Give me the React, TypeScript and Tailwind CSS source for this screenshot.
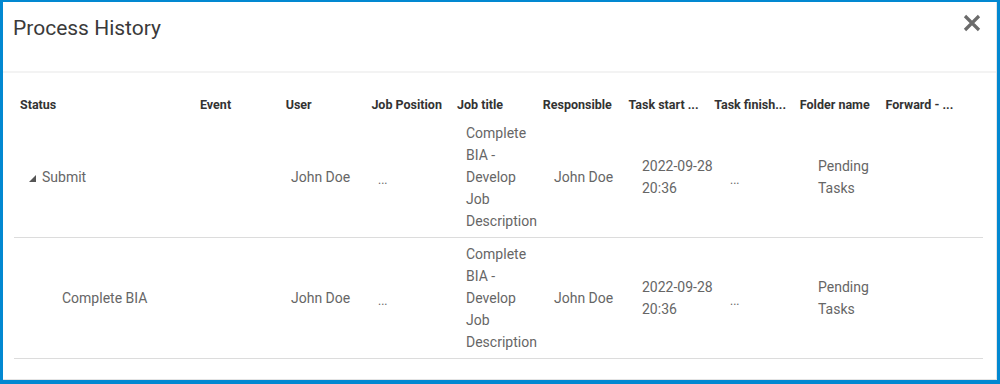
import React from "react";

type Row = {
  status: string;
  expandable: boolean;
  user: string;
  jobPosition: string;
  jobTitle: string[];
  responsible: string;
  taskStart: string[];
  taskFinish: string;
  folder: string[];
};

const headers = [
  "Event",
  "User",
  "Job Position",
  "Job title",
  "Responsible",
  "Task start ...",
  "Task finish...",
  "Folder name",
  "Forward - ...",
];

const rows: Row[] = [
  {
    status: "Submit",
    expandable: true,
    user: "John Doe",
    jobPosition: "...",
    jobTitle: ["Complete", "BIA -", "Develop", "Job", "Description"],
    responsible: "John Doe",
    taskStart: ["2022-09-28", "20:36"],
    taskFinish: "...",
    folder: ["Pending", "Tasks"],
  },
  {
    status: "Complete BIA",
    expandable: false,
    user: "John Doe",
    jobPosition: "...",
    jobTitle: ["Complete", "BIA -", "Develop", "Job", "Description"],
    responsible: "John Doe",
    taskStart: ["2022-09-28", "20:36"],
    taskFinish: "...",
    folder: ["Pending", "Tasks"],
  },
];

function Lines({ lines }: { lines: string[] }) {
  return (
    <div className="flex flex-col">
      {lines.map((l, i) => (
        <span key={i} className="leading-[22px]">
          {l}
        </span>
      ))}
    </div>
  );
}

export default function App() {
  return (
    <div
      className="w-[1000px] h-[384px] bg-[#0288d1] pt-[2px] pl-[3px] pr-[3px] pb-[4px] overflow-hidden"
      style={{ fontFamily: "Roboto, 'Liberation Sans', sans-serif" }}
    >
      <div className="h-full bg-white flex flex-col border-r border-b border-[#e4e4e4]">
        {/* title bar */}
        <div className="h-[71px] shrink-0 flex items-start justify-between pl-[10px] pr-[14px] pt-[14px] border-b-2 border-[#f3f3f3]">
          <h2 className="text-[21px] leading-[24px] text-[#3a3a3a]">Process History</h2>
          <svg width="20" height="20" viewBox="0 0 20 20" className="mt-[-3px]">
            <path d="M3 3 L17 17 M17 3 L3 17" stroke="#6b6b6b" strokeWidth="3.2" strokeLinecap="butt" />
          </svg>
        </div>

        <div className="pl-[11px] pr-[13px]">
          {/* header */}
          <div className="flex h-[44px] items-end pb-[5px] text-[12.5px] leading-[15px] font-bold text-[#333] whitespace-nowrap">
            <div className="w-[180px] pl-[6px]">Status</div>
            {headers.map((h) => (
              <div key={h} className="w-[85.7px] pl-[6px] overflow-hidden">
                {h}
              </div>
            ))}
          </div>

          {/* rows */}
          {rows.map((r, i) => (
            <div
              key={i}
              className="flex items-center h-[121px] border-b border-[#dcdcdc] text-[14px] text-[#666]"
            >
              <div className="w-[271px] flex items-center">
                {r.expandable ? (
                  <span className="flex items-center pl-[15px]">
                    <svg width="7" height="7" viewBox="0 0 7 7" className="mr-[6px] mt-[2px]">
                      <path d="M7 0 L7 7 L0 7 Z" fill="#555" />
                    </svg>
                    {r.status}
                  </span>
                ) : (
                  <span className="pl-[48px]">{r.status}</span>
                )}
              </div>
              <div className="w-[87px] pl-[6px]">{r.user}</div>
              <div className="w-[88px] pl-[6px] text-[12px] pt-[6px]">{r.jobPosition}</div>
              <div className="w-[88px] pl-[6px]">
                <Lines lines={r.jobTitle} />
              </div>
              <div className="w-[88px] pl-[6px]">{r.responsible}</div>
              <div className="w-[88px] pl-[6px]">
                <Lines lines={r.taskStart} />
              </div>
              <div className="w-[88px] pl-[6px] text-[12px] pt-[6px]">{r.taskFinish}</div>
              <div className="w-[88px] pl-[6px]">
                <Lines lines={r.folder} />
              </div>
            </div>
          ))}
        </div>
      </div>
    </div>
  );
}
